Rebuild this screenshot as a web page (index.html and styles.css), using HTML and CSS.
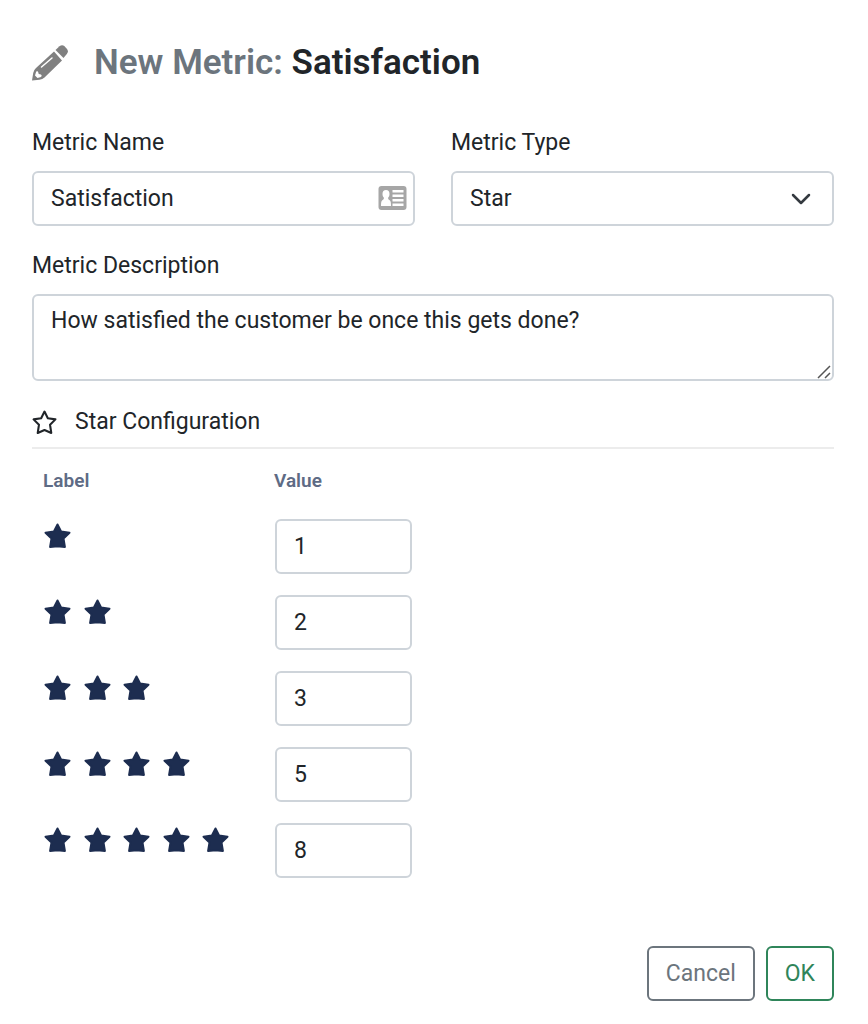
FILE: index.html
```html
<!DOCTYPE html>
<html lang="en">
<head>
    <meta charset="UTF-8">
    <meta name="viewport" content="width=device-width, initial-scale=1">
    <title>New Metric</title>
    <link rel="stylesheet" href="styles.css">
</head>
<body>
<!-- shared star shape -->
<svg class="sprite" aria-hidden="true">
    <symbol id="star" viewBox="0 0 28 28">
        <path d="M13.500 2.500l3.600 7 8.400 1.200-6 5.800 1.400 8.500-7.400-.7-7.400.7 1.400-8.500-6-5.800 8.400-1.200z"/>
    </symbol>
</svg>
<form class="metric">
    <header class="title">
        <svg class="pencil" viewBox="0 0 36 36" aria-hidden="true">
            <path fill="#808080" d="M22 6.500 4 23Q1.700 25 1.200 28L0 35.500 7.500 34.700Q10.500 34.300 12.500 32.500L30 15.500z"/>
            <path fill="#808080" d="M23.500 5 27.500 1.300Q30 -.8 32.300 1L35 4Q36.800 6.300 35 8.700L31.500 13z"/>
            <path fill="none" stroke="#fff" stroke-width="1.500" stroke-linecap="round" d="M9.500 22 20 13"/>
            <path fill="#fff" d="M4.200 26.500Q6 25.500 6.300 27.500L6.700 29 9 29.500Q10.500 30.500 9 32L5.500 33 3 30.500z"/>
        </svg>
        <h1><span>New Metric:</span> Satisfaction</h1>
    </header>

    <div class="fields">
        <div class="field">
            <label for="name">Metric Name</label>
            <div class="control">
                <input class="box" id="name" type="text" value="Satisfaction">
                <svg class="card" viewBox="0 0 28 24" aria-hidden="true">
                    <rect width="28" height="24" rx="3" fill="#a6a6a6"/>
                    <path fill="#fff" d="M7.500 4C9.800 4 11 5.600 11 8c0 1.700-.6 3-1.400 3.800 0 1.400.4 1.800 1.600 2.400 1 .6 1.300 2.200 1.300 5.800H2.500c0-3.600.3-5.200 1.300-5.800 1.200-.6 1.600-1 1.600-2.400C4.600 11 4 9.700 4 8c0-2.400 1.200-4 3.500-4z"/>
                    <path fill="#fff" d="M14 4h11v2.500H14zM14 8.500h11V11H14zM14 13h11v2.500H14zM14 17.500h11V20H14z"/>
                </svg>
            </div>
        </div>
        <div class="field">
            <label for="type">Metric Type</label>
            <div class="control">
                <select class="box" id="type">
                    <option>Star</option>
                </select>
                <svg class="arrow" viewBox="0 0 20 12" aria-hidden="true">
                    <path d="M2 2l8 8 8-8"/>
                </svg>
            </div>
        </div>
        <div class="field wide">
            <label for="description">Metric Description</label>
            <div class="control">
                <textarea class="box" id="description">How satisfied the customer be once this gets done?</textarea>
                <svg class="grip" viewBox="0 0 14 14" aria-hidden="true">
                    <path d="M1 13L13 1M8 13l5-5"/>
                </svg>
            </div>
        </div>
    </div>

    <section>
        <h2>
            <svg class="outline" viewBox="0 0 24 24" aria-hidden="true">
                <path d="M12 1.500l3.200 6.500 7.300 1-5.200 5.100 1.200 8-6.500-2.900-6.500 2.900 1.200-8L1.500 9l7.300-1z"/>
            </svg>
            Star Configuration
        </h2>
        <table>
            <thead>
            <tr><th class="label" scope="col">Label</th><th scope="col">Value</th></tr>
            </thead>
            <tbody>
            <tr>
                <td><div class="stars"><svg><use href="#star"/></svg></div></td>
                <td><input class="box value" type="text" value="1" aria-label="One star"></td>
            </tr>
            <tr>
                <td><div class="stars"><svg><use href="#star"/></svg><svg><use href="#star"/></svg></div></td>
                <td><input class="box value" type="text" value="2" aria-label="Two stars"></td>
            </tr>
            <tr>
                <td><div class="stars"><svg><use href="#star"/></svg><svg><use href="#star"/></svg><svg><use href="#star"/></svg></div></td>
                <td><input class="box value" type="text" value="3" aria-label="Three stars"></td>
            </tr>
            <tr>
                <td><div class="stars"><svg><use href="#star"/></svg><svg><use href="#star"/></svg><svg><use href="#star"/></svg><svg><use href="#star"/></svg></div></td>
                <td><input class="box value" type="text" value="5" aria-label="Four stars"></td>
            </tr>
            <tr>
                <td><div class="stars"><svg><use href="#star"/></svg><svg><use href="#star"/></svg><svg><use href="#star"/></svg><svg><use href="#star"/></svg><svg><use href="#star"/></svg></div></td>
                <td><input class="box value" type="text" value="8" aria-label="Five stars"></td>
            </tr>
            </tbody>
        </table>
    </section>

    <footer>
        <button class="cancel" type="button">Cancel</button>
        <button class="ok" type="submit">OK</button>
    </footer>
</form>
</body>
</html>
```
FILE: styles.css
```css
*{
    box-sizing: border-box;
    margin: 0;
    padding: 0;
}
body{
    background: #fff;
    color: #212529;
    font: 23px/36px Roboto, sans-serif;
}
input, select, textarea, button{
    font: inherit;
    color: inherit;
}
svg{
    display: block;
    flex: none;
}
.sprite{
    display: none;
}
.metric{
    padding: 40px 34px 20px 32px;
}

/* title */
.title{
    display: flex;
    align-items: center;
    gap: 26px;
    margin-bottom: 40px;
}
.pencil{
    width: 36px;
    height: 36px;
}
h1{
    font-size: 35px;
    line-height: 45px;
    font-weight: 600;
}
h1 span{
    color: #6c757d;
}

/* fields */
.fields{
    display: grid;
    grid-template-columns: 1fr 1fr;
    gap: 22px 36px;
}
.wide{
    grid-column: 1 / 3;
}
label{
    display: block;
    margin-bottom: 10px;
}
.control{
    position: relative;
}
.box{
    display: block;
    width: 100%;
    height: 55px;
    padding: 0 17px;
    border: 2px solid #ced4da;
    border-radius: 6px;
    background: #fff;
    appearance: none;
    outline: none;
}
textarea.box{
    height: 87px;
    padding-top: 7px;
    resize: vertical;
}
textarea::-webkit-resizer{
    display: none;
}
.card, .arrow, .grip{
    position: absolute;
    pointer-events: none;
}
.card{
    top: 15px;
    right: 8px;
    width: 29px;
    height: 24px;
}
.arrow{
    top: 22px;
    right: 23px;
    width: 20px;
    height: 12px;
    fill: none;
    stroke: #343a40;
    stroke-width: 2.5;
    stroke-linecap: round;
    stroke-linejoin: round;
}
.grip{
    right: 3px;
    bottom: 2px;
    width: 14px;
    height: 14px;
    stroke: #555;
    stroke-width: 1.5;
}

/* star configuration */
h2{
    display: flex;
    align-items: center;
    gap: 18px;
    margin-top: 23px;
    padding-bottom: 7px;
    border-bottom: 2px solid #ececec;
    font-size: 23px;
    font-weight: 400;
}
.outline{
    width: 25px;
    height: 25px;
    fill: none;
    stroke: #212529;
    stroke-width: 2;
    stroke-linejoin: round;
}
table{
    border-collapse: collapse;
}
th{
    padding: 14px 11px;
    color: #5e6b85;
    font-size: 19px;
    line-height: 36px;
    font-weight: 600;
    text-align: left;
}
.label{
    width: 231px;
}
td{
    padding: 6px 12px 15px;
    vertical-align: top;
}
.value{
    width: 137px;
}
.stars{
    display: grid;
    grid-template-columns: repeat(5, 1fr);
    width: 198px;
    padding-top: 3px;
}
.stars svg{
    width: 28px;
    height: 28px;
    fill: #1d2d50;
    stroke: #1d2d50;
    stroke-width: 2;
    stroke-linejoin: round;
}

/* buttons */
footer{
    display: flex;
    justify-content: flex-end;
    gap: 11px;
    margin-top: 53px;
}
button{
    height: 55px;
    padding: 0 17px;
    border: 2px solid;
    border-radius: 6px;
    background: #fff;
}
.cancel{
    color: #6c757d;
}
.ok{
    color: #2f855a;
}
```
